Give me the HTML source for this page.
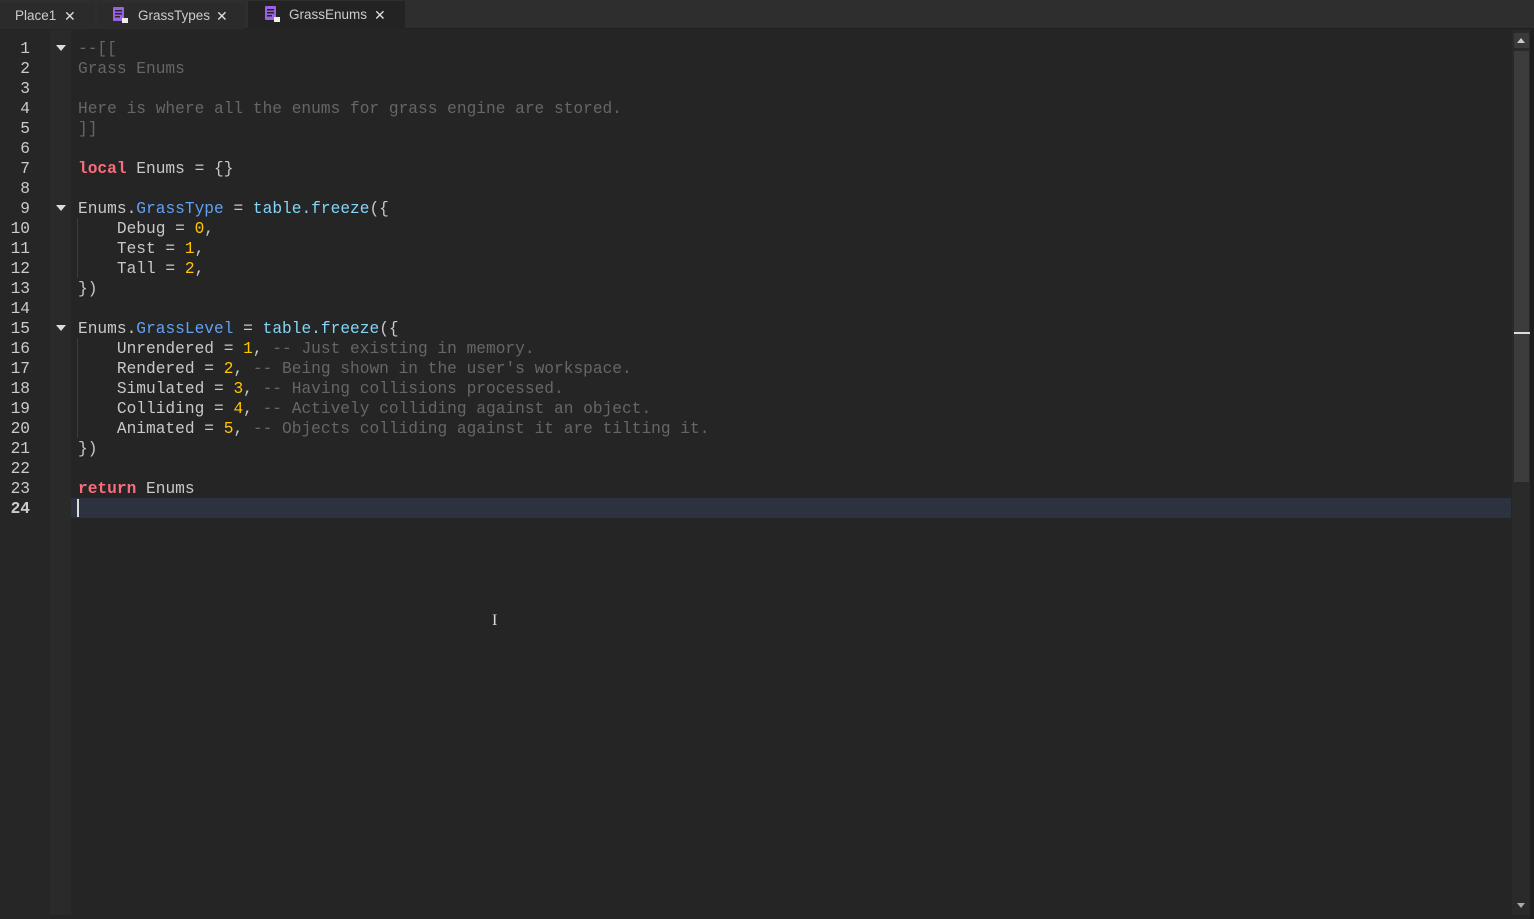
<!DOCTYPE html>
<html><head><style>
*{margin:0;padding:0;box-sizing:border-box}
body{width:1534px;height:919px;background:#252525;overflow:hidden;position:relative;font-family:"Liberation Sans",sans-serif}
.tabs{position:absolute;left:0;top:0;width:1534px;height:29px;background:#2e2e2e;border-bottom:1px solid #1f1f1f}
.tab{position:absolute;top:3px;height:26px;color:#ccc;font-size:13.5px;line-height:26px;background:#2b2b2b}
.tab .x{position:absolute;top:0;font-size:14px;color:#ddd}
.gut{position:absolute;left:0;top:30px;width:50px;height:889px;background:#262626}
.fold{position:absolute;left:50px;top:30px;width:21px;height:885px;background:#2a2a2a}
.ln{position:absolute;left:0;width:30px;text-align:right;color:#ccc;font:16.2px "Liberation Mono",monospace;line-height:20px}
.code{position:absolute;left:78px;top:39px;font:16.2px "Liberation Mono",monospace;line-height:20px;color:#c8c8c8;white-space:pre}
.c{color:#666}.k{color:#f86d7c;font-weight:bold}.n{color:#ffc600}.b{color:#61a1f1}.f{color:#84d6f7}
.tri{position:absolute;left:56px;width:0;height:0;border-left:5px solid transparent;border-right:5px solid transparent;border-top:6px solid #ddd}
</style></head><body>
<div class="tabs">
 <div class="tab" style="left:0;width:95px;"><span style="position:absolute;left:15px">Place1</span><span class="x" style="left:64px">✕</span></div>
 <div class="tab" style="left:97px;width:148px;"><svg style="position:absolute;left:15px;top:3px" width="18" height="18"><rect x="1" y="1" width="11" height="14" rx="1" fill="#9a62e0"/><rect x="3" y="4" width="7" height="1.5" fill="#2b2b2b"/><rect x="3" y="7" width="7" height="1.5" fill="#2b2b2b"/><rect x="3" y="10" width="5" height="1.5" fill="#2b2b2b"/><path d="M10 12h6v5h-6z" fill="#eee"/></svg><span style="position:absolute;left:41px">GrassTypes</span><span class="x" style="left:119px">✕</span></div>
 <div class="tab" style="left:248px;width:157px;background:#232323;top:1px;height:28px;line-height:28px"><svg style="position:absolute;left:16px;top:4px" width="18" height="18"><rect x="1" y="1" width="11" height="14" rx="1" fill="#9a62e0"/><rect x="3" y="4" width="7" height="1.5" fill="#232323"/><rect x="3" y="7" width="7" height="1.5" fill="#232323"/><rect x="3" y="10" width="5" height="1.5" fill="#232323"/><path d="M10 12h6v5h-6z" fill="#eee"/></svg><span style="position:absolute;left:41px">GrassEnums</span><span class="x" style="left:126px">✕</span></div>
</div>
<div class="gut"></div><div class="fold"></div>
<div style="position:absolute;left:71px;top:498px;width:1440px;height:20px;background:#2d3240"></div>
<div style="position:absolute;left:77px;top:499px;width:2px;height:18px;background:#ddd"></div>
<div style="position:absolute;left:77px;top:218px;width:1px;height:60px;background:#3a3a3a"></div>
<div style="position:absolute;left:77px;top:338px;width:1px;height:100px;background:#3a3a3a"></div>
<div class="tri" style="top:45px"></div><div class="tri" style="top:205px"></div><div class="tri" style="top:325px"></div>
<div class="ln" style="top:39px">1<br>2<br>3<br>4<br>5<br>6<br>7<br>8<br>9<br>10<br>11<br>12<br>13<br>14<br>15<br>16<br>17<br>18<br>19<br>20<br>21<br>22<br>23<br><b>24</b></div>
<div class="code"><span class="c">--[[
Grass Enums

Here is where all the enums for grass engine are stored.
]]</span>

<span class="k">local</span> Enums = {}

Enums.<span class="b">GrassType</span> = <span class="f">table.freeze</span>({
    Debug = <span class="n">0</span>,
    Test = <span class="n">1</span>,
    Tall = <span class="n">2</span>,
})

Enums.<span class="b">GrassLevel</span> = <span class="f">table.freeze</span>({
    Unrendered = <span class="n">1</span>, <span class="c">-- Just existing in memory.</span>
    Rendered = <span class="n">2</span>, <span class="c">-- Being shown in the user's workspace.</span>
    Simulated = <span class="n">3</span>, <span class="c">-- Having collisions processed.</span>
    Colliding = <span class="n">4</span>, <span class="c">-- Actively colliding against an object.</span>
    Animated = <span class="n">5</span>, <span class="c">-- Objects colliding against it are tilting it.</span>
})

<span class="k">return</span> Enums
</div>
<div style="position:absolute;left:1512px;top:30px;width:18px;height:885px;background:#2a2a2a"></div>
<div style="position:absolute;left:1530px;top:30px;width:4px;height:889px;background:#1e1e1e"></div>
<div style="position:absolute;left:1514px;top:33px;width:15px;height:15px;background:#3a3a3a"></div>
<div style="position:absolute;left:1517px;top:38px;border-left:4px solid transparent;border-right:4px solid transparent;border-bottom:5px solid #ccc"></div>
<div style="position:absolute;left:1514px;top:51px;width:15px;height:431px;background:#3c3c3c"></div>
<div style="position:absolute;left:1514px;top:332px;width:16px;height:2px;background:#ddd"></div>
<div style="position:absolute;left:1517px;top:903px;border-left:4px solid transparent;border-right:4px solid transparent;border-top:5px solid #aaa"></div>
<div style="position:absolute;left:492px;top:612px;color:#ddd;font:16px 'Liberation Serif',serif">I</div>
</body></html>
